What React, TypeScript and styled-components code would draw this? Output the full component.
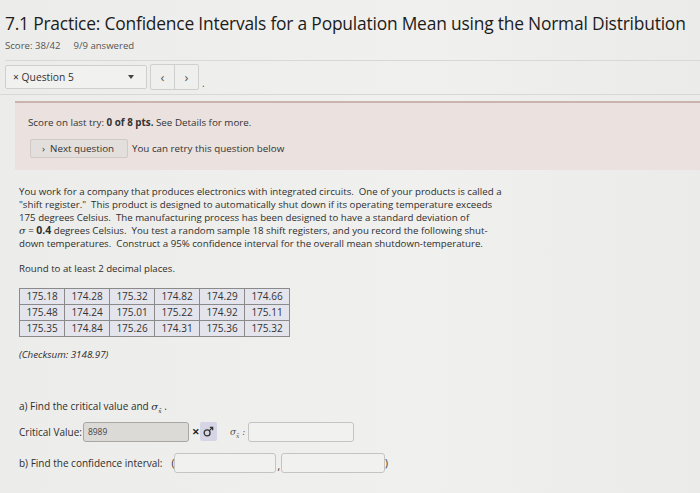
import styled, { createGlobalStyle } from "styled-components"

const GlobalStyle = createGlobalStyle`
  html, body {
    margin: 0;
    padding: 0;
    background: #eeeeec;
    font-family: "Open Sans", "Liberation Sans", sans-serif;
    color: #333;
  }
`

const data = [
  ["175.18", "174.28", "175.32", "174.82", "174.29", "174.66"],
  ["175.48", "174.24", "175.01", "175.22", "174.92", "175.11"],
  ["175.35", "174.84", "175.26", "174.31", "175.36", "175.32"],
]

export default function App() {
  return (
    <>
      <GlobalStyle />
      <Page>
        <Header>
          <Title>7.1 Practice: Confidence Intervals for a Population Mean using the Normal Distribution</Title>
          <ScoreLine>
            <span>Score: 38/42</span>
            <span>9/9 answered</span>
          </ScoreLine>
        </Header>

        <NavBar>
          <QuestionSelect>
            <span>× Question 5</span>
            <Caret />
          </QuestionSelect>
          <ArrowGroup>
            <ArrowBtn>‹</ArrowBtn>
            <ArrowBtn>›</ArrowBtn>
          </ArrowGroup>
          <Dot>.</Dot>
        </NavBar>

        <Feedback>
          <FeedbackText>
            Score on last try: <b>0 of 8 pts.</b> See Details for more.
          </FeedbackText>
          <RetryRow>
            <NextButton>›&nbsp;&nbsp;Next question</NextButton>
            <span>You can retry this question below</span>
          </RetryRow>
        </Feedback>

        <Question>
          <Para>
            You work for a company that produces electronics with integrated circuits.&nbsp; One of your products is called a
            <br />
            "shift register."&nbsp; This product is designed to automatically shut down if its operating temperature exceeds
            <br />
            175 degrees Celsius.&nbsp; The manufacturing process has been designed to have a standard deviation of
            <br />
            <Sigma>σ</Sigma> = <Bold>0.4</Bold> degrees Celsius.&nbsp; You test a random sample 18 shift registers, and you record the following shut-
            <br />
            down temperatures.&nbsp; Construct a 95% confidence interval for the overall mean shutdown-temperature.
          </Para>
          <Para>Round to at least 2 decimal places.</Para>

          <DataTable>
            <tbody>
              {data.map((row, i) => (
                <tr key={i}>
                  {row.map((v, j) => (
                    <td key={j}>{v}</td>
                  ))}
                </tr>
              ))}
            </tbody>
          </DataTable>

          <Checksum>(Checksum: 3148.97)</Checksum>

          <Part>
            a) Find the critical value and <Sigma>σ<sub>x̄</sub></Sigma> .
          </Part>
          <AnswerRow>
            <span>Critical Value:</span>
            <AnswerBox $filled $width={106}>8989</AnswerBox>
            <ClearMark>✕</ClearMark>
            <PreviewBtn>
              <svg width="11" height="11" viewBox="0 0 12 12" fill="none" stroke="#333" strokeWidth="1.4">
                <circle cx="4.5" cy="7.5" r="3.2" />
                <path d="M7 5 L10.5 1.5 M7.5 1.5 H10.5 V4.5" />
              </svg>
            </PreviewBtn>
            <SigmaLabel>
              σ<sub>x̄</sub> :
            </SigmaLabel>
            <AnswerBox $width={106} />
          </AnswerRow>

          <IntervalRow>
            <span>b) Find the confidence interval:</span>
            <span>(</span>
            <AnswerBox $width={102} />
            <Comma>,</Comma>
            <AnswerBox $width={104} />
            <span>)</span>
          </IntervalRow>
        </Question>
      </Page>
    </>
  )
}

const Page = styled.div`
  width: 700px;
  height: 493px;
  overflow: hidden;
  background: linear-gradient(90deg, #ececea 0%, #f0f0ee 60%, #ebebea 100%);
`

const Header = styled.div`
  padding: 10px 0 0 5px;
`

const Title = styled.h1`
  margin: 0;
  font-size: 17.4px;
  letter-spacing: -0.2px;
  font-weight: 400;
  line-height: 26px;
  color: #1c1c1c;
  white-space: nowrap;
`

const ScoreLine = styled.div`
  display: flex;
  gap: 13px;
  margin-top: 3px;
  font-size: 9.6px;
  color: #555;
  padding-bottom: 8px;
  border-bottom: 1px solid #d8d8d6;
`

const NavBar = styled.div`
  display: flex;
  align-items: center;
  gap: 3px;
  padding: 3px 5px 4px;
  border-bottom: 1px solid #d8d8d6;
`

const QuestionSelect = styled.div`
  width: 142px;
  height: 24px;
  box-sizing: border-box;
  display: flex;
  align-items: center;
  justify-content: space-between;
  padding: 0 12px 0 7px;
  border: 1px solid #cfcfcd;
  border-radius: 2px;
  background: #f1f1ef;
  font-size: 10.3px;
  color: #333;
`

const Caret = styled.span`
  width: 0;
  height: 0;
  border-left: 3px solid transparent;
  border-right: 3px solid transparent;
  border-top: 4px solid #444;
`

const ArrowGroup = styled.div`
  display: flex;
  height: 24px;
  border: 1px solid #cfcfcd;
  border-radius: 2px;
  background: #efefed;
`

const ArrowBtn = styled.div`
  width: 23px;
  display: flex;
  align-items: center;
  justify-content: center;
  font-size: 13px;
  color: #555;
  & + & {
    border-left: 1px solid #cfcfcd;
  }
`

const Dot = styled.span`
  font-size: 10px;
  color: #555;
  align-self: flex-end;
`

const Feedback = styled.div`
  margin: 6px 0 0 15px;
  padding: 13px 0 12px 13px;
  background: #ebe1de;
  border-top: 2px solid #cdb3ae;
  font-size: 9.8px;
  color: #333;
`

const FeedbackText = styled.div`
  line-height: 14px;
`

const RetryRow = styled.div`
  display: flex;
  align-items: center;
  gap: 4px;
  margin-top: 9px;
  margin-left: 2px;
`

const NextButton = styled.div`
  width: 98px;
  height: 19px;
  box-sizing: border-box;
  display: flex;
  align-items: center;
  padding-left: 11px;
  background: #e2dfdd;
  border: 1px solid #cfcac8;
  border-radius: 2px;
  color: #333;
`

const Question = styled.div`
  padding: 16px 0 0 19px;
  font-size: 9.7px;
  color: #2e2e2e;
`

const Para = styled.p`
  margin: 0 0 12px;
  white-space: nowrap;
  line-height: 12.8px;
`

const Bold = styled.b`
  font-size: 10.5px;
`

const Sigma = styled.i`
  font-family: "DejaVu Serif", "Liberation Serif", serif;
  sub {
    font-size: 6px;
    line-height: 0;
  }
`

const DataTable = styled.table`
  border-collapse: collapse;
  margin-top: 12px;
  background: #e4e4ec;
  border: 1px solid #777;
  td {
    border: 1px solid #8a8a8a;
    padding: 0 5px;
    height: 15px;
    width: 34px;
    font-size: 10px;
    text-align: center;
    color: #333;
  }
`

const Checksum = styled.div`
  margin-top: 11px;
  font-style: italic;
  font-size: 9.8px;
`

const Part = styled.div`
  margin-top: 38px;
  font-size: 10px;
`

const AnswerRow = styled.div`
  display: flex;
  align-items: center;
  margin-top: 9px;
  font-size: 10px;
  > span:first-child {
    margin-right: 1px;
  }
`

const AnswerBox = styled.div<{ $filled?: boolean; $width: number }>`
  width: ${(p) => p.$width}px;
  height: 20px;
  box-sizing: border-box;
  padding: 0 4px;
  display: flex;
  align-items: center;
  border: 1px solid ${(p) => (p.$filled ? "#a9a7a4" : "#c4c4c2")};
  border-radius: 3px;
  background: ${(p) => (p.$filled ? "#dcdad7" : "#f1f1ef")};
  font-size: 8.5px;
  color: #444;
`

const ClearMark = styled.span`
  margin-left: 3px;
  font-size: 9px;
  font-weight: 700;
  color: #222;
`

const PreviewBtn = styled.div`
  width: 17px;
  height: 19px;
  display: flex;
  align-items: center;
  justify-content: center;
  background: #d6d5e6;
  border-radius: 2px;
`

const SigmaLabel = styled.i`
  margin: 0 3px 0 13px;
  font-family: "DejaVu Serif", "Liberation Serif", serif;
  font-size: 9px;
  color: #555;
  sub {
    font-size: 6px;
    line-height: 0;
  }
`

const IntervalRow = styled.div`
  display: flex;
  align-items: center;
  margin-top: 11px;
  font-size: 10px;
  > span:first-child {
    margin-right: 9px;
  }
`

const Comma = styled.span`
  margin: 0 1px;
  align-self: flex-end;
`
